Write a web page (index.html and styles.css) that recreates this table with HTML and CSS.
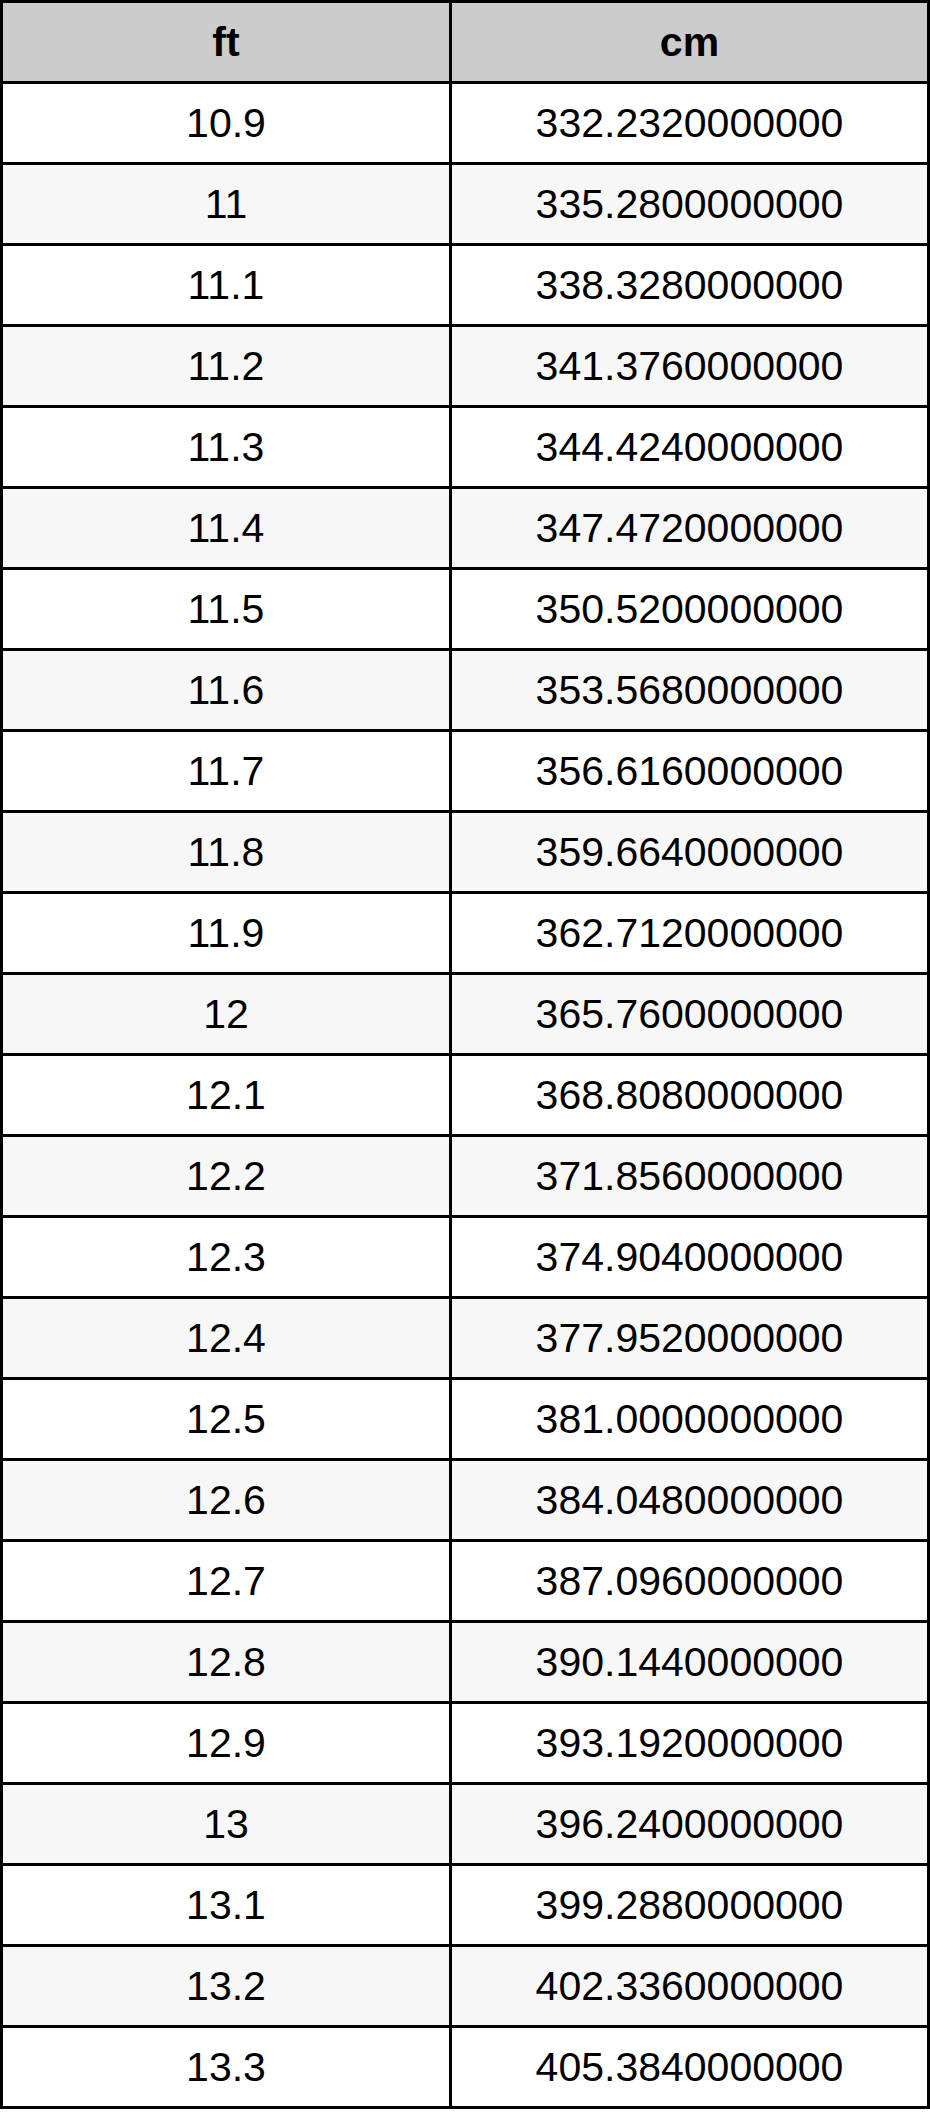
FILE: index.html
```html
<!DOCTYPE html>
<html>
<head>
<meta charset="utf-8">
<link rel="stylesheet" href="styles.css">
</head>
<body>
<table class="conv">
<colgroup><col class="c1"><col class="c2"></colgroup>
<thead>
<tr><th>ft</th><th>cm</th></tr>
</thead>
<tbody>
<tr><td>10.9</td><td>332.2320000000</td></tr>
<tr><td>11</td><td>335.2800000000</td></tr>
<tr><td>11.1</td><td>338.3280000000</td></tr>
<tr><td>11.2</td><td>341.3760000000</td></tr>
<tr><td>11.3</td><td>344.4240000000</td></tr>
<tr><td>11.4</td><td>347.4720000000</td></tr>
<tr><td>11.5</td><td>350.5200000000</td></tr>
<tr><td>11.6</td><td>353.5680000000</td></tr>
<tr><td>11.7</td><td>356.6160000000</td></tr>
<tr><td>11.8</td><td>359.6640000000</td></tr>
<tr><td>11.9</td><td>362.7120000000</td></tr>
<tr><td>12</td><td>365.7600000000</td></tr>
<tr><td>12.1</td><td>368.8080000000</td></tr>
<tr><td>12.2</td><td>371.8560000000</td></tr>
<tr><td>12.3</td><td>374.9040000000</td></tr>
<tr><td>12.4</td><td>377.9520000000</td></tr>
<tr><td>12.5</td><td>381.0000000000</td></tr>
<tr><td>12.6</td><td>384.0480000000</td></tr>
<tr><td>12.7</td><td>387.0960000000</td></tr>
<tr><td>12.8</td><td>390.1440000000</td></tr>
<tr><td>12.9</td><td>393.1920000000</td></tr>
<tr><td>13</td><td>396.2400000000</td></tr>
<tr><td>13.1</td><td>399.2880000000</td></tr>
<tr><td>13.2</td><td>402.3360000000</td></tr>
<tr><td>13.3</td><td>405.3840000000</td></tr>
</tbody>
</table>
</body>
</html>
```

FILE: styles.css
```css
html, body {
  margin: 0;
  padding: 0;
  background: #ffffff;
}

.conv {
  width: 930px;
  border-collapse: collapse;
  table-layout: fixed;
  font-family: "Liberation Sans", Arial, Helvetica, sans-serif;
  font-size: 41px;
  color: #000000;
}

.c1 { width: 449px; }
.c2 { width: 478px; }

.conv th,
.conv td {
  border: 3px solid #000000;
  height: 78px;
  padding: 0;
  text-align: center;
  vertical-align: middle;
  line-height: 1;
}

.conv th {
  background: #cccccc;
  font-weight: bold;
}

.conv tbody tr:nth-child(odd) td {
  background: #ffffff;
}

.conv tbody tr:nth-child(even) td {
  background: #f7f7f7;
}
```
